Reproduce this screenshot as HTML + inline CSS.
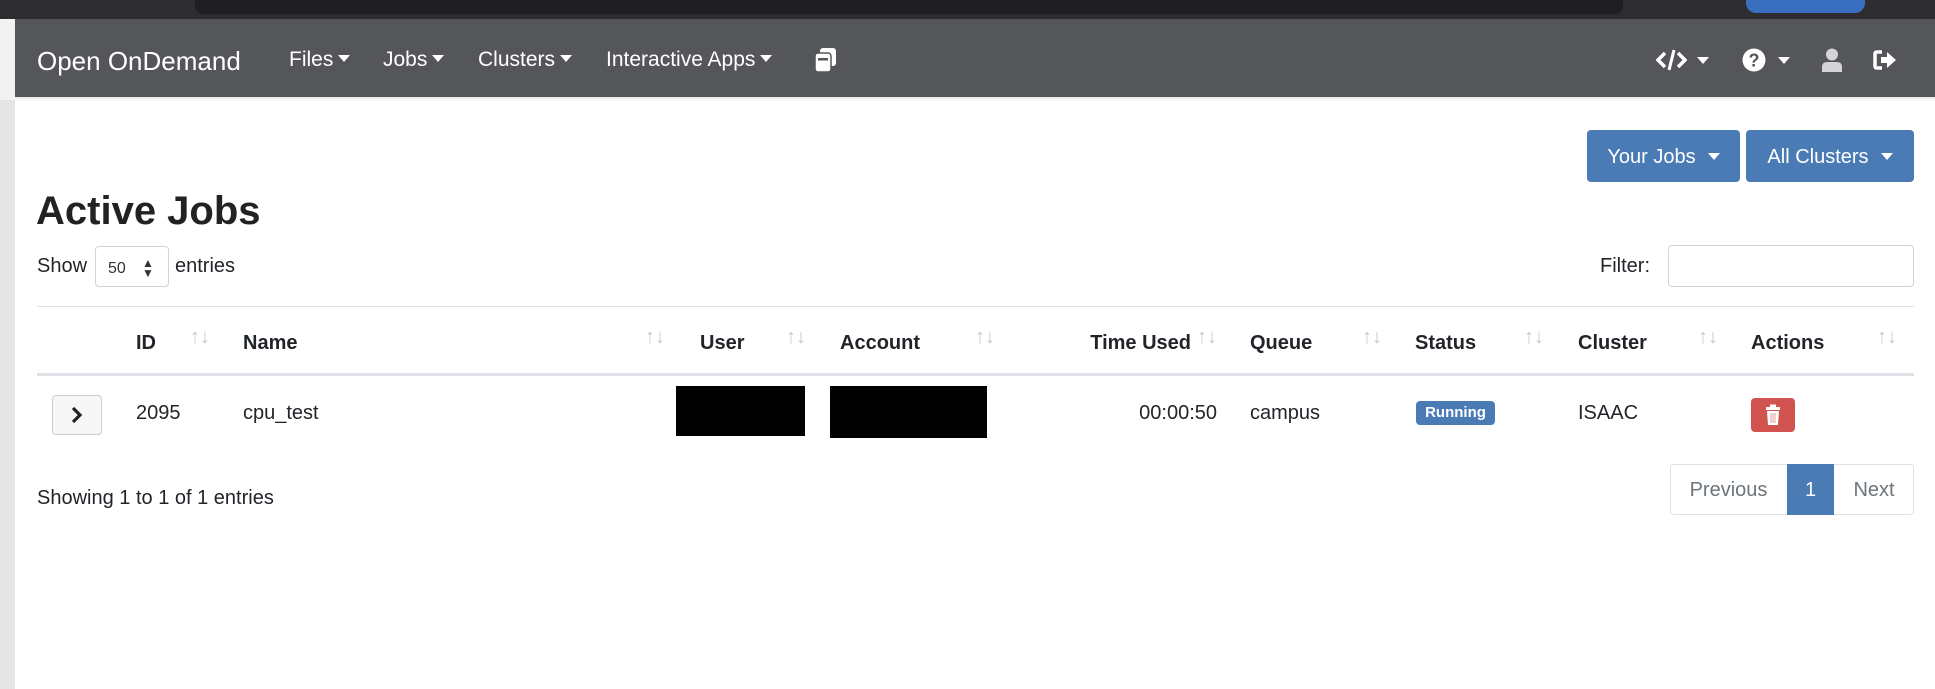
<!DOCTYPE html>
<html><head><meta charset="utf-8"><style>
*{margin:0;padding:0;box-sizing:border-box}
body{width:1935px;height:689px;overflow:hidden;background:#fff;font-family:"Liberation Sans",sans-serif;color:#212529;position:relative}
.a{position:absolute;white-space:nowrap}
.c{line-height:30px;height:30px}
.nav{color:#fff;font-size:21px}
.car{display:inline-block;width:0;height:0;border-left:6px solid transparent;border-right:6px solid transparent;border-top:7px solid #fff;vertical-align:middle;margin-left:5px;margin-top:-3px}
.th{font-weight:bold;font-size:20px}
.s{color:#c8c8c8;font-size:20px;letter-spacing:0px}
.td{font-size:20px}
</style></head><body>
<div class="a" style="left:0;top:0;width:1935px;height:19px;background:#2d2d2f"></div>
<div class="a" style="left:195px;top:0;width:1428px;height:14px;background:#1f1f21;border-radius:0 0 8px 8px"></div>
<div class="a" style="left:1746px;top:0;width:119px;height:13px;background:#3a6fc0;border-radius:0 0 10px 10px"></div>
<div class="a" style="left:0;top:19px;width:15px;height:670px;background:#e5e5e5"></div>
<div class="a" style="left:0;top:19px;width:15px;height:81px;background:#f2f2f2"></div>
<div class="a" style="left:15px;top:19px;width:1920px;height:78px;background:#55565a"></div>
<div class="a" style="left:15px;top:97px;width:1920px;height:4px;background:linear-gradient(#e8e8e8,#fff)"></div>

<div class="a nav c" style="left:37px;top:46px;font-size:26px">Open OnDemand</div>
<div class="a nav c" style="left:289px;top:45px">Files<span class="car"></span></div>
<div class="a nav c" style="left:383px;top:45px">Jobs<span class="car"></span></div>
<div class="a nav c" style="left:478px;top:45px">Clusters<span class="car"></span></div>
<div class="a nav c" style="left:606px;top:45px">Interactive Apps<span class="car"></span></div>
<svg class="a" style="left:814px;top:47px" width="24" height="26" viewBox="0 0 24 26"><rect x="6" y="1" width="16" height="18" rx="3" fill="#fff"/><rect x="1" y="6" width="16" height="19" rx="3" fill="#fff" stroke="#55565a" stroke-width="1.5"/><rect x="4" y="11" width="10" height="2.5" fill="#55565a"/></svg>

<svg class="a" style="left:1656px;top:48px" width="31" height="24" viewBox="0 0 31 24"><path d="M9 5 L2 12 L9 19" stroke="#fff" stroke-width="3.5" fill="none"/><path d="M22 5 L29 12 L22 19" stroke="#fff" stroke-width="3.5" fill="none"/><path d="M18 2 L13 22" stroke="#fff" stroke-width="3"/></svg>
<span class="a car" style="left:1692px;top:60px"></span>
<svg class="a" style="left:1742px;top:48px" width="24" height="24" viewBox="0 0 24 24"><circle cx="12" cy="12" r="11.5" fill="#fff"/><text x="12" y="18.5" text-anchor="middle" font-family="Liberation Sans" font-weight="bold" font-size="18" fill="#55565a">?</text></svg>
<span class="a car" style="left:1773px;top:60px"></span>
<svg class="a" style="left:1821px;top:48px" width="22" height="24" viewBox="0 0 22 24"><circle cx="11" cy="6.5" r="6" fill="#d4d4d6"/><path d="M1 24 V19 Q1 14 6 14 H16 Q21 14 21 19 V24Z" fill="#d4d4d6"/></svg>
<svg class="a" style="left:1873px;top:49px" width="25" height="22" viewBox="0 0 25 22"><path d="M9 3 H4 Q2 3 2 5 V17 Q2 19 4 19 H9" stroke="#fff" stroke-width="3.5" fill="none"/><path d="M8 8 H14 V3 L23 11 L14 19 V14 H8Z" fill="#fff"/></svg>

<div class="a" style="left:1587px;top:130px;width:153px;height:52px;background:#4a7bb5;border-radius:4px;color:#fff;font-size:20px;line-height:54px;text-align:center">Your Jobs<span class="car" style="margin-left:12px"></span></div>
<div class="a" style="left:1746px;top:130px;width:168px;height:52px;background:#4a7bb5;border-radius:4px;color:#fff;font-size:20px;line-height:54px;text-align:center">All Clusters<span class="car" style="margin-left:12px"></span></div>

<div class="a" style="left:36px;top:188px;font-size:40px;font-weight:bold;line-height:46px;color:#222">Active Jobs</div>
<div class="a td c" style="left:37px;top:251px">Show</div>
<div class="a" style="left:95px;top:246px;width:74px;height:41px;border:1px solid #ced4da;border-radius:4px;font-size:16px;line-height:43px;padding-left:12px;color:#333">50<span style="position:absolute;left:46px;font-size:12px;line-height:10px;top:11px">▲<br>▼</span></div>
<div class="a td c" style="left:175px;top:251px">entries</div>
<div class="a td c" style="left:1600px;top:251px">Filter:</div>
<div class="a" style="left:1668px;top:245px;width:246px;height:42px;border:1px solid #ced4da;border-radius:4px"></div>

<div class="a" style="left:37px;top:306px;width:1877px;height:1px;background:#dee2e6"></div>
<div class="a" style="left:37px;top:373px;width:1877px;height:3px;background:#dee2e6"></div>

<div class="a th c" style="left:136px;top:328px">ID</div><div class="a s c" style="left:190px;top:322px">↑↓</div>
<div class="a th c" style="left:243px;top:328px">Name</div><div class="a s c" style="left:645px;top:322px">↑↓</div>
<div class="a th c" style="left:700px;top:328px">User</div><div class="a s c" style="left:786px;top:322px">↑↓</div>
<div class="a th c" style="left:840px;top:328px">Account</div><div class="a s c" style="left:975px;top:322px">↑↓</div>
<div class="a th c" style="right:744px;top:328px">Time Used</div><div class="a s c" style="left:1197px;top:322px">↑↓</div>
<div class="a th c" style="left:1250px;top:328px">Queue</div><div class="a s c" style="left:1362px;top:322px">↑↓</div>
<div class="a th c" style="left:1415px;top:328px">Status</div><div class="a s c" style="left:1524px;top:322px">↑↓</div>
<div class="a th c" style="left:1578px;top:328px">Cluster</div><div class="a s c" style="left:1698px;top:322px">↑↓</div>
<div class="a th c" style="left:1751px;top:328px">Actions</div><div class="a s c" style="left:1877px;top:322px">↑↓</div>

<div class="a" style="left:52px;top:395px;width:50px;height:40px;background:#f7f7f7;border:1px solid #ccc;border-radius:4px"></div>
<svg class="a" style="left:70px;top:406px" width="14" height="18" viewBox="0 0 14 18"><path d="M3 2 L10 9 L3 16" stroke="#222" stroke-width="3.2" fill="none"/></svg>
<div class="a td c" style="left:136px;top:398px">2095</div>
<div class="a td c" style="left:243px;top:398px">cpu_test</div>
<div class="a" style="left:676px;top:386px;width:129px;height:50px;background:#000"></div>
<div class="a" style="left:830px;top:386px;width:157px;height:52px;background:#000"></div>
<div class="a td c" style="right:718px;top:398px">00:00:50</div>
<div class="a td c" style="left:1250px;top:398px">campus</div>
<div class="a" style="left:1416px;top:401px;width:79px;height:24px;background:#4a7bb5;border-radius:4px;color:#fff;font-weight:bold;font-size:15px;line-height:24px;text-align:center">Running</div>
<div class="a td c" style="left:1578px;top:398px">ISAAC</div>
<div class="a" style="left:1751px;top:398px;width:44px;height:34px;background:#d0534f;border-radius:4px"></div>
<svg class="a" style="left:1765px;top:404px" width="16" height="22" viewBox="0 0 16 22"><rect x="1" y="3" width="14" height="3" fill="#fff"/><rect x="5" y="0.5" width="6" height="3" fill="#fff"/><path d="M2 7 H14 L13 21 H3Z" fill="#fff"/><path d="M6 9V19M8 9V19M10 9V19" stroke="#e6a09c" stroke-width="1"/></svg>

<div class="a td c" style="left:37px;top:483px">Showing 1 to 1 of 1 entries</div>
<div class="a" style="left:1670px;top:464px;width:244px;height:51px;border:1px solid #dee2e6;border-radius:4px"></div>
<div class="a td" style="left:1670px;top:464px;width:117px;height:51px;line-height:53px;text-align:center;color:#6c757d">Previous</div>
<div class="a td" style="left:1787px;top:464px;width:47px;height:51px;line-height:53px;text-align:center;background:#4a7bb5;color:#fff">1</div>
<div class="a td" style="left:1834px;top:464px;width:80px;height:51px;line-height:53px;text-align:center;color:#6c757d">Next</div>
</body></html>
